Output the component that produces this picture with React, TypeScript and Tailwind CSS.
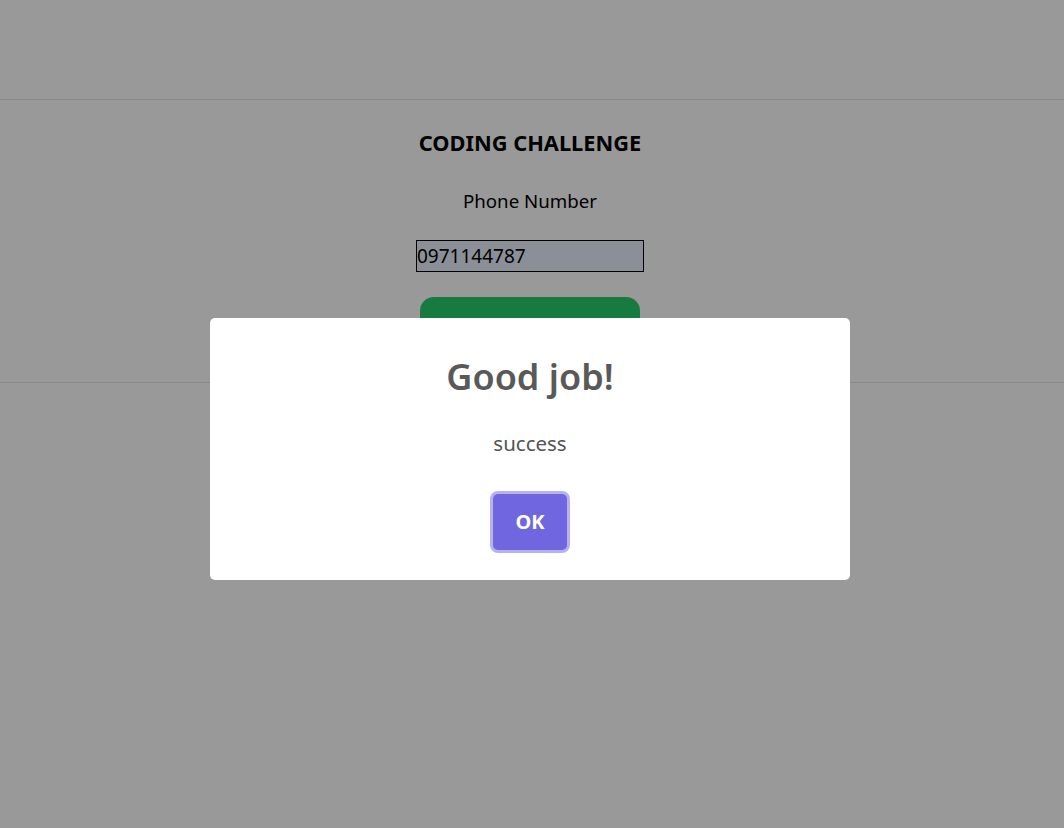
import { useState } from 'react'

export default function App() {
  const [phone, setPhone] = useState('0971144787')

  return (
    <div className="relative min-h-[828px] bg-white font-['Noto_Sans',sans-serif] text-black">
      {/* page */}
      <div className="h-[99px]" />
      <div className="border-t border-b border-[#e5e7eb] h-[284px] pr-[4px] flex flex-col items-center">
        <h1 className="mt-[29px] text-[21.8px] leading-[28px] font-bold">CODING CHALLENGE</h1>
        <label className="mt-[30px] text-[18.7px] leading-[28px]">Phone Number</label>
        <input
          value={phone}
          onChange={(e) => setPhone(e.target.value)}
          className="mt-[25px] w-[228px] h-[32px] border border-black bg-[#e8f0fe] text-[19px] px-0 outline-none"
        />
        <button className="mt-[25px] w-[220px] h-[62px] rounded-[14px] bg-[#27cb69] text-white text-[18px] font-semibold">
          Submit
        </button>
      </div>

      {/* overlay + dialog */}
      <div className="fixed inset-0 bg-black/40 flex justify-center items-start pt-[318px] pr-[4px]">
        <div className="w-[640px] h-[262px] bg-white rounded-[5px] flex flex-col items-center">
          <h2 className="mt-[35px] text-[36px] leading-[48px] font-semibold text-[#595959]">Good job!</h2>
          <p className="mt-[28px] text-[20.5px] leading-[28px] text-[#545454]">success</p>
          <button className="mt-[37px] w-[74px] h-[56px] rounded-[5px] bg-[#7066e0] text-white text-[20px] font-bold ring-[3px] ring-[#7066e0]/50">
            OK
          </button>
        </div>
      </div>
    </div>
  )
}
